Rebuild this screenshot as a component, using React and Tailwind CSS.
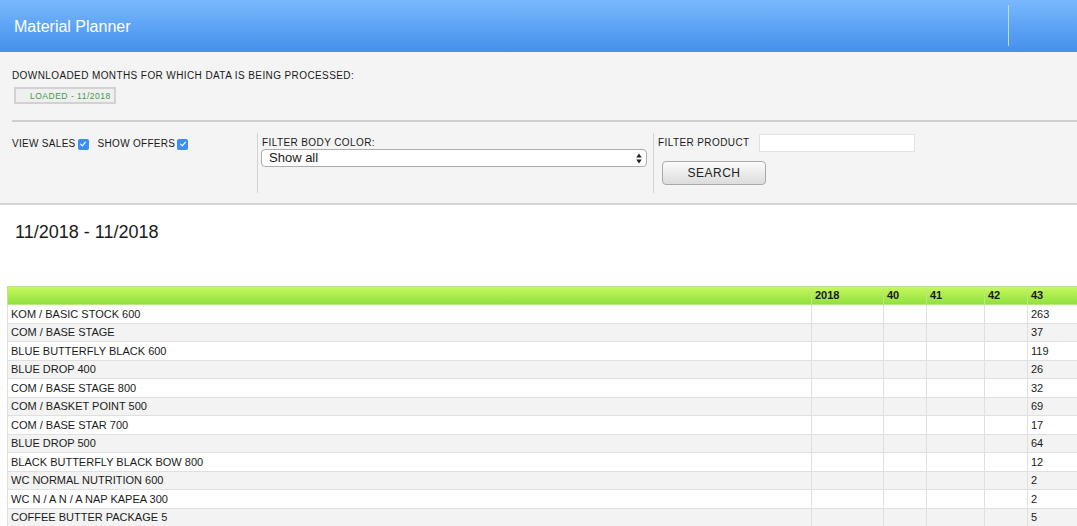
import React from 'react';

const rows = [
  ['KOM / BASIC STOCK 600', '263'],
  ['COM / BASE STAGE', '37'],
  ['BLUE BUTTERFLY BLACK 600', '119'],
  ['BLUE DROP 400', '26'],
  ['COM / BASE STAGE 800', '32'],
  ['COM / BASKET POINT 500', '69'],
  ['COM / BASE STAR 700', '17'],
  ['BLUE DROP 500', '64'],
  ['BLACK BUTTERFLY BLACK BOW 800', '12'],
  ['WC NORMAL NUTRITION 600', '2'],
  ['WC N / A N / A NAP KAPEA 300', '2'],
  ['COFFEE BUTTER PACKAGE 5', '5'],
];

function Check() {
  return (
    <span className="inline-flex w-[11px] h-[11px] rounded-[2px] bg-[#3b8ff0] items-center justify-center ml-[2px]">
      <svg viewBox="0 0 10 10" className="w-[8px] h-[8px]">
        <path d="M2 5.2 L4.2 7.4 L8 2.6" fill="none" stroke="white" strokeWidth="1.4" strokeLinecap="round" strokeLinejoin="round" />
      </svg>
    </span>
  );
}

function App() {
  return (
    <div className="w-[1077px] h-[526px] overflow-hidden bg-white text-[#1a1a1a] font-['Liberation_Sans',Arial,sans-serif]">
      {/* header */}
      <div className="h-[52px] bg-linear-to-b from-[#78b8fd] to-[#4490ec] flex items-center relative">
        <span className="pl-[14px] text-white text-[16px] pt-[1px]">Material Planner</span>
        <div className="absolute left-[1008px] top-[5px] h-[41px] w-px bg-[#bcd9fb]" />
      </div>

      {/* filters */}
      <div className="bg-[#f4f4f4] h-[153px] border-b-2 border-[#d4d4d4]">
        <div className="pl-[12px] pt-[18px] text-[10px] leading-[12px] tracking-[0.04em]">
          DOWNLOADED MONTHS FOR WHICH DATA IS BEING PROCESSED:
        </div>
        <div className="ml-[14px] mt-[5px] w-[102px] h-[17px] border-2 border-[#d2d2d2] bg-[#efefef] text-[#3f9a48] text-[8.5px] leading-[10px] tracking-[0.06em] whitespace-nowrap flex items-center pl-[14px]">
          LOADED - 11/2018
        </div>
        <div className="ml-[12px] mt-[16px] h-[2px] bg-[#cfcfcf]" />
        <div className="flex mt-[11px] h-[60px]">
          <div className="w-[257px] pl-[12px] pt-[5px] flex items-start text-[10px] leading-[12px] tracking-[0.03em]">
            <span className="flex items-center">VIEW SALES<Check /></span>
            <span className="flex items-center ml-[9px]">SHOW OFFERS<Check /></span>
          </div>
          <div className="w-px bg-[#d2d2d2]" />
          <div className="w-[395px] pl-[3px] pt-[4px]">
            <div className="text-[10px] tracking-[0.04em] pl-[1px] leading-[12px]">FILTER BODY COLOR:</div>
            <div className="w-[386px] h-[18px] bg-white border border-[#adadad] rounded-[4px] flex items-center justify-between pl-[7px] pr-[4px] text-[13px]">
              <span>Show all</span>
              <svg viewBox="0 0 6 12" className="w-[6px] h-[11px]">
                <path d="M3 0.5 L6 4.8 H0 Z M3 11.5 L6 7.2 H0 Z" fill="#222" />
              </svg>
            </div>
          </div>
          <div className="w-px bg-[#d2d2d2]" />
          <div className="pl-[4px] pt-[1px]">
            <div className="flex items-center">
              <span className="text-[10px] leading-[12px] tracking-[0.04em] w-[101px]">FILTER PRODUCT</span>
              <div className="w-[156px] h-[18px] bg-white border border-[#e2e2e2]" />
            </div>
            <button className="mt-[9px] ml-[4px] w-[104px] h-[24px] rounded-[4px] border border-[#a9a9a9] bg-linear-to-b from-[#fbfbfb] to-[#dcdcdc] text-[12px] leading-[14px] tracking-[0.04em] text-[#222]">
              SEARCH
            </button>
          </div>
        </div>
      </div>

      {/* title */}
      <div className="pl-[15px] pt-[16px] h-[81px] text-[18px] leading-[22px]">11/2018 - 11/2018</div>

      {/* table */}
      <table className="ml-[7px] w-[1070px] border-collapse text-[11px] table-fixed">
        <colgroup>
          <col className="w-[804px]" />
          <col className="w-[72px]" />
          <col className="w-[43px]" />
          <col className="w-[58px]" />
          <col className="w-[43px]" />
          <col className="w-[50px]" />
        </colgroup>
        <thead>
          <tr className="h-[18px] bg-linear-to-b from-[#c6f85e] to-[#8ddf3b] font-bold text-left">
            <th className="border border-[#b6e886]"></th>
            <th className="border border-[#b6e886] pl-[3px] text-left">2018</th>
            <th className="border border-[#b6e886] pl-[3px] text-left">40</th>
            <th className="border border-[#b6e886] pl-[3px] text-left">41</th>
            <th className="border border-[#b6e886] pl-[3px] text-left">42</th>
            <th className="border border-[#b6e886] pl-[3px] text-left">43</th>
          </tr>
        </thead>
        <tbody>
          {rows.map(([name, val], i) => (
            <tr key={i} className={i % 2 === 0 ? 'h-[18.5px] bg-white' : 'h-[18.5px] bg-[#f3f3f3]'}>
              <td className="border border-[#e0e0e0] pl-[3px] p-0">{name}</td>
              <td className="border border-[#e0e0e0]"></td>
              <td className="border border-[#e0e0e0]"></td>
              <td className="border border-[#e0e0e0]"></td>
              <td className="border border-[#e0e0e0]"></td>
              <td className="border border-[#e0e0e0] pl-[3px] p-0">{val}</td>
            </tr>
          ))}
        </tbody>
      </table>
    </div>
  );
}

export default App;
